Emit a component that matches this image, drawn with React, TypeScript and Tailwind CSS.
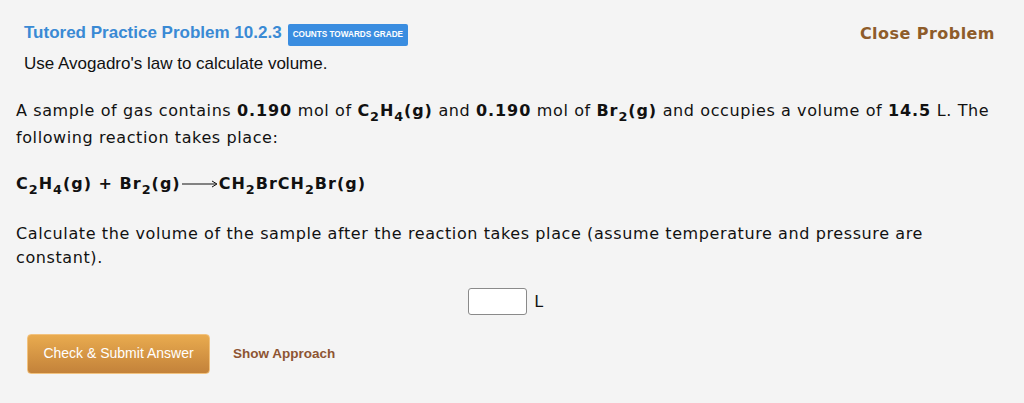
import React from 'react';

const verdana = { fontFamily: '"DejaVu Sans", Verdana, sans-serif' };

function Sub({ children }: { children: React.ReactNode }) {
  return <sub className="text-[0.8em] align-[-0.2em] leading-none">{children}</sub>;
}

function Arrow() {
  return (
    <svg width="36" height="10" viewBox="0 0 36 10" className="inline-block align-middle mx-[1px]">
      <line x1="0" y1="5" x2="34" y2="5" stroke="#111" strokeWidth="1" />
      <path d="M30 2 L35 5 L30 8" fill="none" stroke="#111" strokeWidth="1" />
    </svg>
  );
}

export default function App() {
  return (
    <div className="w-[1024px] h-[403px] bg-[#f4f4f4] text-[#111] overflow-hidden" style={{ fontFamily: '"Liberation Sans", Arial, sans-serif' }}>
      <div className="flex items-start justify-between pl-[24px] pr-[29px] pt-[19px]">
        <div>
          <div className="flex items-center gap-[6px]">
            <span className="text-[17px] font-bold text-[#3a8ad4]">Tutored Practice Problem 10.2.3</span>
            <span className="mt-[5px] bg-[#3a8de0] text-white text-[8.2px] font-bold px-[5px] py-[7px] rounded-[2px] leading-none">COUNTS TOWARDS GRADE</span>
          </div>
          <div className="text-[17px] mt-[5px]">Use Avogadro's law to calculate volume.</div>
        </div>
        <div className="text-[16px] font-bold text-[#8e5c2a] mt-[3px] tracking-[0.45px]" style={verdana}>Close Problem</div>
      </div>

      <div className="px-[16px] mt-[20px] text-[16px] leading-[27px] tracking-[0.6px]" style={verdana}>
        <p>
          A sample of gas contains <b className="tracking-[0.9px]">0.190</b> mol of <b className="tracking-[0.9px]">C<Sub>2</Sub>H<Sub>4</Sub>(g)</b> and <b className="tracking-[0.9px]">0.190</b> mol of <b className="tracking-[0.9px]">Br<Sub>2</Sub>(g)</b> and occupies a volume of <b className="tracking-[0.9px]">14.5</b> L. The following reaction takes place:
        </p>
        <p className="mt-[19px] font-bold tracking-[1px]">
          C<Sub>2</Sub>H<Sub>4</Sub>(g) + Br<Sub>2</Sub>(g)<Arrow />CH<Sub>2</Sub>BrCH<Sub>2</Sub>Br(g)
        </p>
        <p className="mt-[25px] leading-[24px] pr-[70px]">
          Calculate the volume of the sample after the reaction takes place (assume temperature and pressure are constant).
        </p>
        <div className="flex items-center justify-center gap-[7px] mt-[18px] pr-[12px]">
          <div className="w-[59px] h-[27px] bg-white border border-[#8a8a8a] rounded-[3px]"></div>
          <span className="text-[16px]">L</span>
        </div>
      </div>

      <div className="flex items-center gap-[23px] pl-[27px] mt-[19px]">
        <button className="w-[183px] h-[40px] rounded-[4px] border border-[#f2c27e] bg-gradient-to-b from-[#e9ab4f] to-[#c3823a] text-white text-[14px]" style={{ fontFamily: '"Liberation Sans", Arial, sans-serif' }}>
          Check &amp; Submit Answer
        </button>
        <span className="text-[13.5px] font-bold text-[#8e5432]">Show Approach</span>
      </div>
    </div>
  );
}
